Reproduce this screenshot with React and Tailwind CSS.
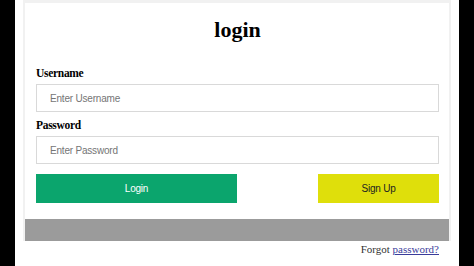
import React from "react";

export default function App() {
  return (
    <div className="flex h-[266px] w-[474px] overflow-hidden bg-white">
      <div className="w-[15px] shrink-0 bg-black" />
      <div className="flex w-[444px] flex-col">
        <div className="ml-[8px] w-[428px] border-x-2 border-t-[3px] border-[#f1f1f1] bg-white">
          <div className="px-[11px] pr-[10px]">
            <h1 className="mt-[14px] text-center font-['Liberation_Serif',serif] text-[22px] font-bold leading-[26px] text-black">
              login
            </h1>
            <label className="mt-[23px] block font-['Liberation_Serif',serif] text-[11.5px] font-bold leading-[14px] tracking-[-0.3px] text-black">
              Username
            </label>
            <input
              type="text"
              placeholder="Enter Username"
              className="mt-[4px] block h-[28px] w-full border border-[#d9d9d9] bg-white px-[13px] font-['Liberation_Sans',sans-serif] text-[10px] tracking-[-0.2px] text-[#555] outline-none placeholder:text-[#757575]"
            />
            <label className="mt-[6px] block font-['Liberation_Serif',serif] text-[11.5px] font-bold leading-[14px] tracking-[-0.3px] text-black">
              Password
            </label>
            <input
              type="password"
              placeholder="Enter Password"
              className="mt-[4px] block h-[28px] w-full border border-[#d9d9d9] bg-white px-[13px] font-['Liberation_Sans',sans-serif] text-[10px] tracking-[-0.2px] text-[#555] outline-none placeholder:text-[#757575]"
            />
            <div className="mt-[10px] flex justify-between">
              <button className="h-[29px] w-[201px] bg-[#0ba56d] font-['Liberation_Sans',sans-serif] text-[10px] tracking-[-0.2px] text-white">
                Login
              </button>
              <button className="h-[29px] w-[121px] bg-[#dfdf0b] font-['Liberation_Sans',sans-serif] text-[10px] tracking-[-0.2px] text-[#222]">
                Sign Up
              </button>
            </div>
          </div>
          <div className="mt-[16px] h-[22px] bg-[#9b9b9b]" />
        </div>
        <div className="pr-[20px] pt-[1px] text-right font-['Liberation_Serif',serif] text-[11px] leading-[14px] text-[#333]">
          Forgot{" "}
          <a href="#" className="text-[#3a3c9a] underline">
            password?
          </a>
        </div>
      </div>
      <div className="flex-1 bg-black" />
    </div>
  );
}
